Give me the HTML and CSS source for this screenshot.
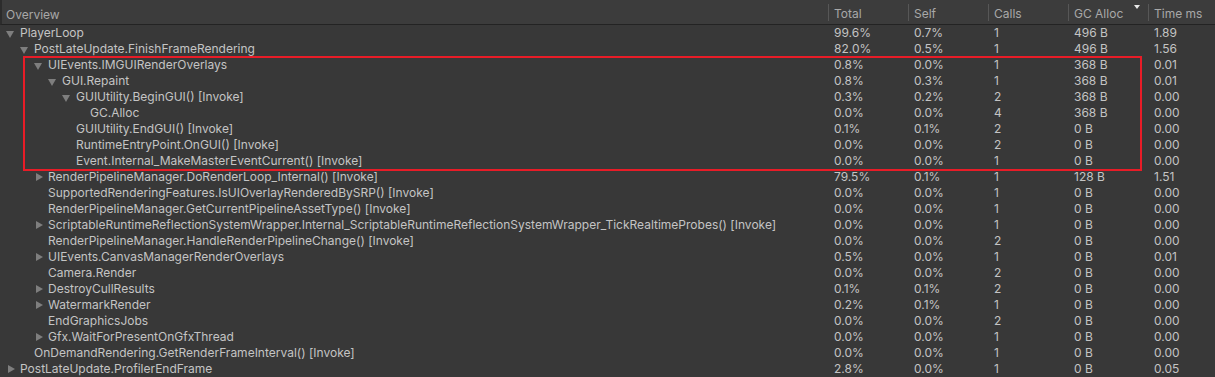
FILE: index.html
```html
<!DOCTYPE html>
<html>
<head>
<meta charset="utf-8">
<link rel="stylesheet" href="styles.css">
</head>
<body>
<div class="header">
  <div class="hcell name">Overview</div>
  <div class="hcell">Total</div>
  <div class="hcell">Self</div>
  <div class="hcell">Calls</div>
  <div class="hcell">GC Alloc<span class="sort"></span></div>
  <div class="hcell">Time ms</div>
</div>
<div class="list">
  <div class="row"><div class="name l0"><span class="arrow down"></span>PlayerLoop</div><div class="c">99.6%</div><div class="c">0.7%</div><div class="c">1</div><div class="c">496 B</div><div class="c">1.89</div></div>
  <div class="row"><div class="name l1"><span class="arrow down"></span>PostLateUpdate.FinishFrameRendering</div><div class="c">82.0%</div><div class="c">0.5%</div><div class="c">1</div><div class="c">496 B</div><div class="c">1.56</div></div>
  <div class="row"><div class="name l2"><span class="arrow down"></span>UIEvents.IMGUIRenderOverlays</div><div class="c">0.8%</div><div class="c">0.0%</div><div class="c">1</div><div class="c">368 B</div><div class="c">0.01</div></div>
  <div class="row"><div class="name l3"><span class="arrow down"></span>GUI.Repaint</div><div class="c">0.8%</div><div class="c">0.3%</div><div class="c">1</div><div class="c">368 B</div><div class="c">0.01</div></div>
  <div class="row"><div class="name l4"><span class="arrow down"></span>GUIUtility.BeginGUI() [Invoke]</div><div class="c">0.3%</div><div class="c">0.2%</div><div class="c">2</div><div class="c">368 B</div><div class="c">0.00</div></div>
  <div class="row"><div class="name l5"><span class="arrow"></span>GC.Alloc</div><div class="c">0.0%</div><div class="c">0.0%</div><div class="c">4</div><div class="c">368 B</div><div class="c">0.00</div></div>
  <div class="row"><div class="name l4"><span class="arrow"></span>GUIUtility.EndGUI() [Invoke]</div><div class="c">0.1%</div><div class="c">0.1%</div><div class="c">2</div><div class="c">0 B</div><div class="c">0.00</div></div>
  <div class="row"><div class="name l4"><span class="arrow"></span>RuntimeEntryPoint.OnGUI() [Invoke]</div><div class="c">0.0%</div><div class="c">0.0%</div><div class="c">2</div><div class="c">0 B</div><div class="c">0.00</div></div>
  <div class="row"><div class="name l4"><span class="arrow"></span>Event.Internal_MakeMasterEventCurrent() [Invoke]</div><div class="c">0.0%</div><div class="c">0.0%</div><div class="c">1</div><div class="c">0 B</div><div class="c">0.00</div></div>
  <div class="row"><div class="name l2"><span class="arrow right"></span>RenderPipelineManager.DoRenderLoop_Internal() [Invoke]</div><div class="c">79.5%</div><div class="c">0.1%</div><div class="c">1</div><div class="c">128 B</div><div class="c">1.51</div></div>
  <div class="row"><div class="name l2"><span class="arrow"></span>SupportedRenderingFeatures.IsUIOverlayRenderedBySRP() [Invoke]</div><div class="c">0.0%</div><div class="c">0.0%</div><div class="c">1</div><div class="c">0 B</div><div class="c">0.00</div></div>
  <div class="row"><div class="name l2"><span class="arrow"></span>RenderPipelineManager.GetCurrentPipelineAssetType() [Invoke]</div><div class="c">0.0%</div><div class="c">0.0%</div><div class="c">1</div><div class="c">0 B</div><div class="c">0.00</div></div>
  <div class="row"><div class="name l2"><span class="arrow right"></span>ScriptableRuntimeReflectionSystemWrapper.Internal_ScriptableRuntimeReflectionSystemWrapper_TickRealtimeProbes() [Invoke]</div><div class="c">0.0%</div><div class="c">0.0%</div><div class="c">1</div><div class="c">0 B</div><div class="c">0.00</div></div>
  <div class="row"><div class="name l2"><span class="arrow"></span>RenderPipelineManager.HandleRenderPipelineChange() [Invoke]</div><div class="c">0.0%</div><div class="c">0.0%</div><div class="c">2</div><div class="c">0 B</div><div class="c">0.00</div></div>
  <div class="row"><div class="name l2"><span class="arrow right"></span>UIEvents.CanvasManagerRenderOverlays</div><div class="c">0.5%</div><div class="c">0.0%</div><div class="c">1</div><div class="c">0 B</div><div class="c">0.01</div></div>
  <div class="row"><div class="name l2"><span class="arrow"></span>Camera.Render</div><div class="c">0.0%</div><div class="c">0.0%</div><div class="c">2</div><div class="c">0 B</div><div class="c">0.00</div></div>
  <div class="row"><div class="name l2"><span class="arrow right"></span>DestroyCullResults</div><div class="c">0.1%</div><div class="c">0.1%</div><div class="c">2</div><div class="c">0 B</div><div class="c">0.00</div></div>
  <div class="row"><div class="name l2"><span class="arrow right"></span>WatermarkRender</div><div class="c">0.2%</div><div class="c">0.1%</div><div class="c">1</div><div class="c">0 B</div><div class="c">0.00</div></div>
  <div class="row"><div class="name l2"><span class="arrow"></span>EndGraphicsJobs</div><div class="c">0.0%</div><div class="c">0.0%</div><div class="c">2</div><div class="c">0 B</div><div class="c">0.00</div></div>
  <div class="row"><div class="name l2"><span class="arrow right"></span>Gfx.WaitForPresentOnGfxThread</div><div class="c">0.0%</div><div class="c">0.0%</div><div class="c">1</div><div class="c">0 B</div><div class="c">0.00</div></div>
  <div class="row"><div class="name l1"><span class="arrow"></span>OnDemandRendering.GetRenderFrameInterval() [Invoke]</div><div class="c">0.0%</div><div class="c">0.0%</div><div class="c">1</div><div class="c">0 B</div><div class="c">0.00</div></div>
  <div class="row"><div class="name l0"><span class="arrow right"></span>PostLateUpdate.ProfilerEndFrame</div><div class="c">2.8%</div><div class="c">0.0%</div><div class="c">1</div><div class="c">0 B</div><div class="c">0.05</div></div>
</div>
<div class="highlight"></div>
</body>
</html>
```
FILE: styles.css
```css
html, body {
  margin: 0;
  padding: 0;
  background: #383838;
  overflow: hidden;
}
body {
  width: 1215px;
  height: 377px;
  position: relative;
  font-family: Inter, "Noto Sans", sans-serif;
  font-size: 12px;
  color: #c4c4c4;
}
.header {
  display: grid;
  grid-template-columns: 826px 80px 80px 80px 80px 1fr;
  height: 24px;
  background: #3c3c3c;
  border-bottom: 1px solid #232323;
  border-left: 2px solid #2c2c2c;
}
.hcell {
  position: relative;
  padding: 6px 0 0 6px;
  line-height: 16px;
  color: #a8a8a8;
  white-space: nowrap;
}
.hcell::before {
  content: "";
  position: absolute;
  left: 0;
  top: 4px;
  height: 17px;
  width: 1px;
  background: #575757;
}
.hcell.name {
  padding-left: 4px;
}
.hcell.name::before {
  display: none;
}
.sort {
  position: absolute;
  right: 8px;
  top: 5px;
  width: 0;
  height: 0;
  border-left: 3px solid transparent;
  border-right: 3px solid transparent;
  border-top: 4px solid #e8e8e8;
}
.list {
  display: flex;
  flex-direction: column;
}
.row {
  display: grid;
  grid-template-columns: 828px 80px 80px 80px 80px 1fr;
  height: 16px;
  line-height: 16px;
  white-space: nowrap;
}
.row .c {
  padding-left: 6px;
}
.name {
  display: flex;
  align-items: center;
  overflow: hidden;
}
.arrow {
  flex: none;
  width: 14px;
  height: 16px;
  position: relative;
}
.arrow.down::after {
  content: "";
  position: absolute;
  left: 0;
  top: 6px;
  border-left: 4.5px solid transparent;
  border-right: 4.5px solid transparent;
  border-top: 7px solid #7e7e7e;
}
.arrow.right::after {
  content: "";
  position: absolute;
  left: 2px;
  top: 4px;
  border-top: 4.5px solid transparent;
  border-bottom: 4.5px solid transparent;
  border-left: 7px solid #7e7e7e;
}
.l0 { padding-left: 6px; }
.l1 { padding-left: 20px; }
.l2 { padding-left: 34px; }
.l3 { padding-left: 48px; }
.l4 { padding-left: 62px; }
.l5 { padding-left: 76px; }
.highlight {
  position: absolute;
  left: 23px;
  top: 56px;
  width: 1115px;
  height: 111px;
  border: 2px solid #e81c27;
  pointer-events: none;
}
```
